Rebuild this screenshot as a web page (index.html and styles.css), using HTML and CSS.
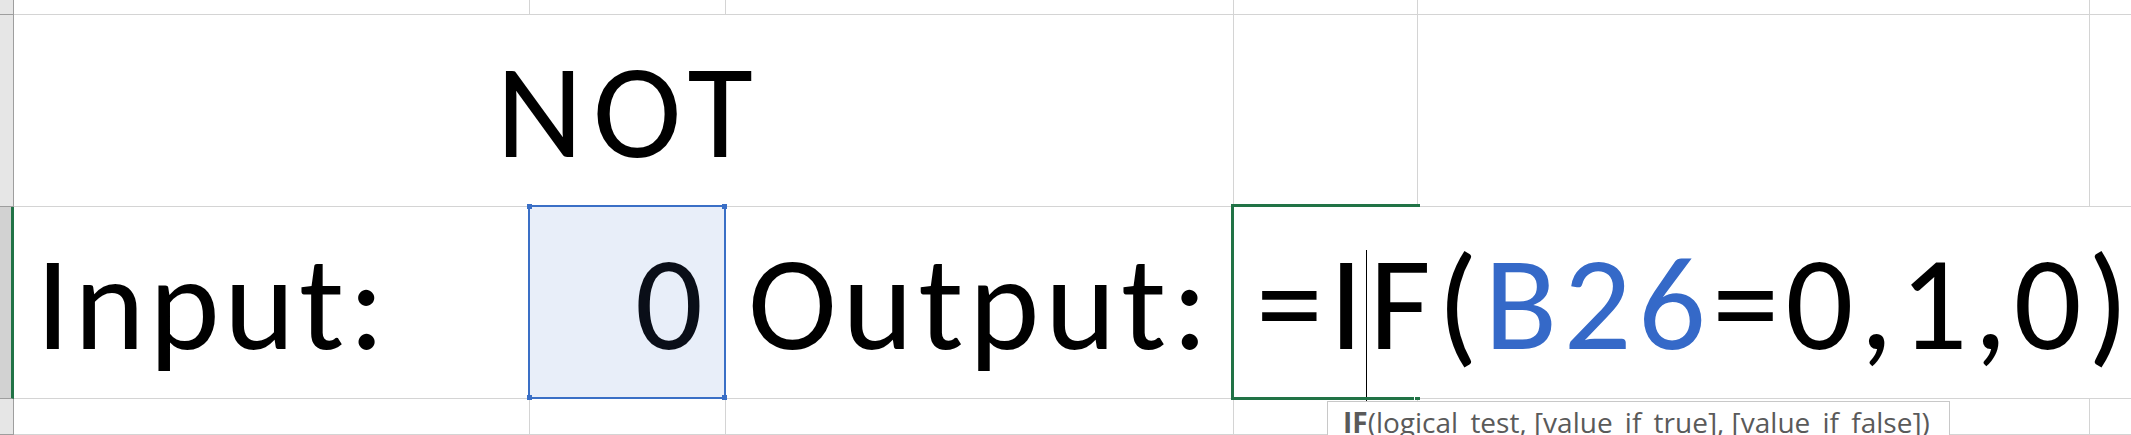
FILE: index.html
```html
<!DOCTYPE html>
<html lang="en">
<head>
<meta charset="utf-8">
<title>NOT</title>
<link rel="stylesheet" href="styles.css">
</head>
<body>
<div class="sheet">
  <div class="rh"></div>
  <div class="cell"></div>
  <div class="cell"></div>
  <div class="cell"></div>
  <div class="cell"></div>
  <div class="cell"></div>
  <div class="cell"></div>

  <div class="rh"></div>
  <div class="cell title">NOT</div>
  <div class="cell"></div>
  <div class="cell"></div>
  <div class="cell"></div>

  <div class="rh active"></div>
  <div class="cell label in">Input:</div>
  <div class="cell num sel">0</div>
  <div class="cell label out">Output:</div>
  <div class="cell formula">=I<span class="caret"></span>F(<span class="ref">B26</span>=0,1,0)</div>

  <div class="rh"></div>
  <div class="cell"></div>
  <div class="cell"></div>
  <div class="cell"></div>
  <div class="cell"></div>
  <div class="cell"></div>
  <div class="cell"></div>

  <div class="refbox">
    <span class="handle tl"></span>
    <span class="handle tr"></span>
    <span class="handle bl"></span>
    <span class="handle br"></span>
  </div>
  <div class="activebox"></div>
  <div class="tooltip"><b>IF</b>(logical_test, [value_if_true], [value_if_false])</div>
</div>
</body>
</html>
```

FILE: styles.css
```css
html, body {
  margin: 0;
  height: 100%;
  overflow: hidden;
  background: #fff;
}

.sheet {
  position: relative;
  display: grid;
  grid-template-columns: 14px 516px 196px 508px 184px 672px 1fr;
  grid-template-rows: 15px 192px 192px 1fr;
  width: 2131px;
  height: 435px;
  font-family: Carlito, Lato, sans-serif;
  color: #000;
}

.rh {
  box-sizing: border-box;
  background: #e6e6e6;
  border-right: 1px solid #9e9e9e;
  border-bottom: 1px solid #9e9e9e;
}

.rh.active {
  background: #d2d2d2;
  border-right: 3px solid #217346;
}

.cell {
  box-sizing: border-box;
  min-width: 0;
  display: flex;
  align-items: flex-end;
  padding: 0 22px 14px;
  border-right: 1px solid #d4d4d4;
  border-bottom: 1px solid #d4d4d4;
  font-size: 134px;
  line-height: 1.2;
  white-space: nowrap;
}

.title {
  grid-column: 2 / 5;
  justify-content: center;
  padding-left: 34px;
  letter-spacing: 9.8px;
}

.label.in {
  padding-left: 22px;
  letter-spacing: 4.6px;
}

.label.out {
  padding-right: 0;
  letter-spacing: 5.7px;
}

.num {
  justify-content: flex-end;
  padding-right: 22px;
}

.sel {
  background: #e8eef9;
  color: #0a0e18;
}

.formula {
  grid-column: 5 / -1;
  border-right: none;
  padding-left: 22px;
  padding-right: 0;
  letter-spacing: 6.4px;
}

.ref {
  color: #3569c8;
}

.caret {
  position: relative;
  display: inline-block;
  width: 0;
  height: 1px;
}

.caret::after {
  content: "";
  position: absolute;
  left: -3px;
  bottom: -44px;
  width: 1px;
  height: 178px;
  background: #000;
}

.refbox {
  position: absolute;
  left: 528px;
  top: 205px;
  width: 198px;
  height: 194px;
  box-sizing: border-box;
  border: 2px solid #3a6fc6;
  pointer-events: none;
}

.handle {
  position: absolute;
  width: 5px;
  height: 5px;
  background: #3a6fc6;
}

.handle.tl { left: -3px; top: -3px; }
.handle.tr { right: -3px; top: -3px; }
.handle.bl { left: -3px; bottom: -3px; }
.handle.br { right: -3px; bottom: -3px; }

.activebox {
  position: absolute;
  left: 1231px;
  top: 204px;
  width: 189px;
  height: 196px;
  box-sizing: border-box;
  border: 3px solid #217346;
  border-right: none;
  pointer-events: none;
}

.activebox::after {
  content: "";
  position: absolute;
  left: 180px;
  bottom: -3px;
  width: 1px;
  height: 3px;
  background: #fff;
}

.tooltip {
  position: absolute;
  left: 1327px;
  top: 401px;
  width: 623px;
  height: 34px;
  box-sizing: border-box;
  padding: 1px 0 0 15px;
  border: 1px solid #c8c8c8;
  border-bottom: none;
  background: #fff;
  font-family: "Open Sans", "Noto Sans", sans-serif;
  font-size: 28px;
  line-height: 1.4;
  color: #5a5a5a;
  white-space: nowrap;
}

.tooltip b {
  font-weight: 700;
}
```
